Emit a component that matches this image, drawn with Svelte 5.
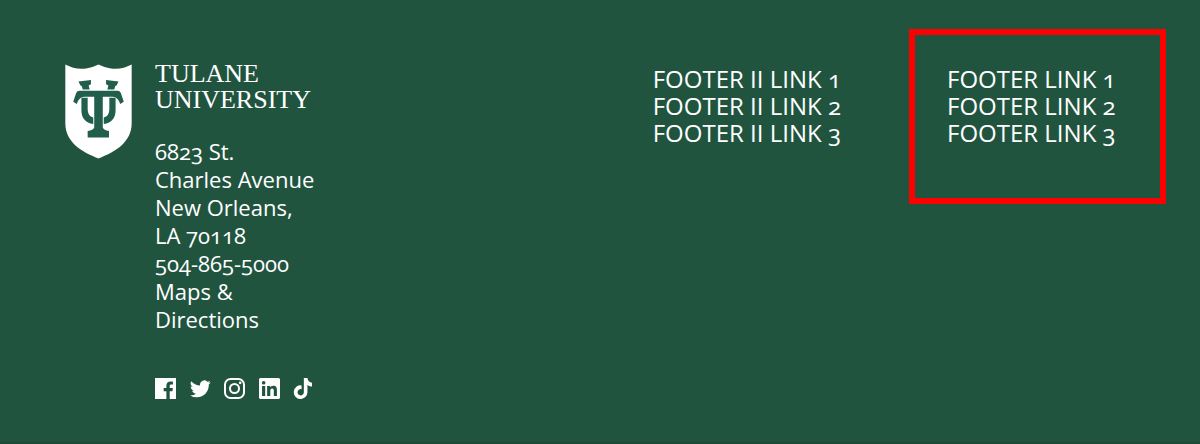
<script>
  const linkColumns = [
    {
      label: 'Footer II',
      highlighted: false,
      links: ['Footer II Link 1', 'Footer II Link 2', 'Footer II Link 3']
    },
    {
      label: 'Footer',
      highlighted: true,
      links: ['Footer Link 1', 'Footer Link 2', 'Footer Link 3']
    }
  ];

  const socials = [
    {
      name: 'Facebook',
      path: 'M0 0h24v24h-7.200v-9h3.100l.5-3.600h-3.600V9.200c0-1.100.4-1.800 1.900-1.800h1.800V4.200c-.3 0-1.500-.1-2.800-.1-2.800 0-4.700 1.700-4.700 4.800v2.500H9.900V15H13v9H0z'
    },
    {
      name: 'Twitter',
      path: 'M23.600 4.900c-.9.400-1.800.6-2.800.8 1-.6 1.800-1.600 2.100-2.700-.9.600-2 1-3.100 1.200a4.900 4.900 0 0 0-8.300 4.400C7.500 8.400 3.900 6.500 1.500 3.600a4.900 4.900 0 0 0 1.500 6.500c-.8 0-1.600-.2-2.200-.6v.1c0 2.300 1.700 4.300 3.900 4.800-.7.200-1.500.2-2.200.1.600 1.900 2.400 3.300 4.500 3.400A9.800 9.800 0 0 1 .2 19.900a13.800 13.800 0 0 0 7.500 2.200c9 0 14.100-7.500 13.800-14.600.9-.7 1.600-1.600 2.100-2.600z'
    },
    {
      name: 'Instagram',
      path: 'M7.500 0h9A7.500 7.500 0 0 1 24 7.500v9a7.500 7.500 0 0 1-7.500 7.500h-9A7.500 7.500 0 0 1 0 16.500v-9A7.500 7.500 0 0 1 7.500 0zm0 2.300a5.200 5.200 0 0 0-5.200 5.200v9a5.200 5.200 0 0 0 5.200 5.200h9a5.200 5.200 0 0 0 5.200-5.200v-9a5.200 5.200 0 0 0-5.200-5.200zM12 5.700a6.300 6.300 0 1 1 0 12.600 6.300 6.300 0 0 1 0-12.600zm0 2.300a4 4 0 1 0 0 8 4 4 0 0 0 0-8zm6.500-4a1.500 1.500 0 1 1 0 3 1.500 1.500 0 0 1 0-3z'
    },
    {
      name: 'LinkedIn',
      path: 'M1.200 0h21.600L24 1.200v21.600L22.800 24H1.200L0 22.800V1.200zM5.300 3.300a2.100 2.100 0 1 0 0 4.200 2.100 2.100 0 0 0 0-4.200zM3.500 9.100v11.400h3.600V9.100zm5.800 0v11.400h3.600v-5.700c0-1.500.4-2.900 2.200-2.900 1.700 0 1.800 1.600 1.800 3v5.600h3.600v-6.300c0-3.100-.7-5.400-4.300-5.400-1.700 0-2.900.9-3.400 1.800h-.1V9.100z'
    },
    {
      name: 'TikTok',
      path: 'M12.400 0h4.100c.2 2.900 2.300 5.200 5.200 5.500v4.100c-1.900 0-3.700-.6-5.200-1.700v8.300A7.800 7.800 0 1 1 9.800 8.500v4.300a3.600 3.600 0 1 0 2.600 3.400z'
    }
  ];
</script>

<footer class="site-footer">
  <div class="brand">
    <a class="shield" href="#home" aria-label="Tulane University home">
      <svg viewBox="29 26 204 288" aria-hidden="true">
        <path
          fill="#fff"
          d="M30 27Q63 45 97 38Q116 35 131 27Q146 35 165 38Q199 45 232 27V206C232 264 181 294 131 313C81 294 30 264 30 206Z"
        />
        <g fill="#215f4c">
          <path d="M70 79L108 74V87L101 91L104 103H83L80 92L76 91Z" />
          <path d="M192 79L154 74V87L161 91L158 103H179L182 92L186 91Z" />
          <path d="M79 128H98V163Q98 184 115 188V208Q79 202 79 166Z" />
          <path d="M183 128H164V163Q164 184 147 188V208Q183 202 183 166Z" />
          <path
            d="M73 107H189Q196 107 199 114L208 140L197 147Q191 126 174 125H144V219Q147 228 163 229V249H98V229Q115 228 118 219V125H88Q71 126 65 147L54 140L63 114Q66 107 73 107Z"
          />
        </g>
      </svg>
    </a>

    <div class="details">
      <a class="wordmark" href="#home">TULANE<br />UNIVERSITY</a>

      <address>
        6823 St.<br />
        Charles Avenue<br />
        New Orleans,<br />
        LA 70118<br />
        <a href="tel:504-865-5000">504-865-5000</a><br />
        <a href="#maps">Maps &amp;<br />Directions</a>
      </address>

      <ul class="socials">
        {#each socials as social}
          <li>
            <a href="#{social.name.toLowerCase()}" aria-label={social.name}>
              <svg viewBox="0 0 24 24" aria-hidden="true">
                <path fill="currentColor" fill-rule="evenodd" d={social.path} />
              </svg>
            </a>
          </li>
        {/each}
      </ul>
    </div>
  </div>

  <div class="link-columns">
    {#each linkColumns as column}
      <nav aria-label={column.label} class:highlighted={column.highlighted}>
        <ul>
          {#each column.links as link}
            <li><a href="#{link.toLowerCase().replaceAll(' ', '-')}">{link}</a></li>
          {/each}
        </ul>
      </nav>
    {/each}
  </div>
</footer>

<style>
  :global(body) {
    margin: 0;
    background: #21543f;
  }

  .site-footer {
    box-sizing: border-box;
    display: flex;
    flex-wrap: wrap;
    justify-content: space-between;
    padding: 29px 34px 43px 65px;
    border-bottom: 2px solid #1d4a38;
    background: #21543f;
    color: #fff;
    font-family: 'Open Sans', 'Noto Sans', sans-serif;
    font-size: 22px;
    line-height: 28px;
    font-variant-numeric: oldstyle-nums;
  }

  a {
    color: inherit;
    text-decoration: none;
  }

  ul {
    margin: 0;
    padding: 0;
    list-style: none;
  }

  .brand {
    display: flex;
    gap: 23px;
    padding-top: 35px;
  }

  .shield svg {
    display: block;
    width: 67px;
    height: 95px;
  }

  .wordmark {
    display: block;
    font-family: 'Liberation Serif', serif;
    font-size: 26px;
    line-height: 26px;
    margin-top: -3px;
  }

  address {
    margin-top: 24px;
    font-style: normal;
    font-weight: 500;
  }

  .socials {
    display: flex;
    justify-content: space-between;
    margin-top: 45px;
  }

  .socials svg {
    display: block;
    width: 21px;
    height: 21px;
  }

  .link-columns {
    display: flex;
    align-items: flex-start;
    gap: 48px;
  }

  nav {
    padding: 36px 20px;
    font-size: 24px;
    line-height: 27px;
    text-transform: uppercase;
  }

  .highlighted {
    box-sizing: border-box;
    width: 257px;
    min-height: 175px;
    padding: 30px 32px;
    border: 6px solid #f00;
  }
</style>
